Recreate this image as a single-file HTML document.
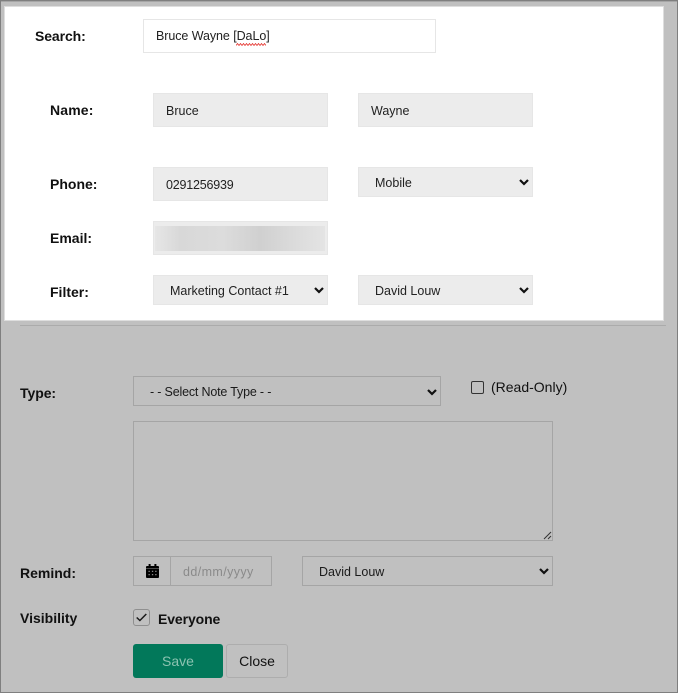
<!DOCTYPE html>
<html><head><meta charset="utf-8"><style>
html,body{margin:0;padding:0;width:678px;height:693px;overflow:hidden;background:#c0c0c0}
body{position:relative;font-family:"Liberation Sans",sans-serif;font-size:12.5px;color:#222}
#o{position:absolute;left:0;top:0;width:676px;height:691px;border:1px solid #7f7f7f}
#o2{position:absolute;left:1px;top:1px;width:676px;height:1px;background:#a6a6a6}
.a{position:absolute;box-sizing:border-box;white-space:nowrap}
.l{font-weight:bold;font-size:14px;color:#111;line-height:18px}
.f{background:#ececec;border:1px solid #e6e6e6;padding-left:12px}
.s{background:#ececec;border:1px solid #e6e6e6}
.g{border:1px solid #a5a5a5}
.t{position:absolute;white-space:nowrap;line-height:16px}
svg{position:absolute;display:block}
</style></head><body>
<div id="o"></div><div id="o2"></div>
<div class="a" style="left:4px;top:6px;width:660px;height:315px;background:#fff;border:1px solid #dedede"></div>
<div class="a" style="left:20px;top:325px;width:646px;height:1px;background:#ababab"></div>

<div class="a l" style="left:35px;top:27px;letter-spacing:-.1px">Search:</div>
<div class="a" style="left:143px;top:19px;width:293px;height:34px;background:#fff;border:1px solid #e6e6e6"></div>
<div class="t" style="left:156px;top:28px;letter-spacing:-.07px">Bruce Wayne [DaLo]</div>
<svg style="left:236px;top:43px" width="30" height="3"><path d="M0 2.5l1.5-2 1.5 2 1.5-2 1.5 2 1.500-2 1.500 2 1.500-2 1.500 2 1.500-2 1.500 2 1.500-2 1.500 2 1.500-2 1.500 2 1.500-2 1.500 2 1.500-2 1.500 2 1.500-2 1.500 2" fill="none" stroke="#e4352f" stroke-width=".8"/></svg>

<div class="a l" style="left:50px;top:101px;letter-spacing:.15px">Name:</div>
<div class="a f" style="left:153px;top:93px;width:175px;height:34px"></div>
<div class="t" style="left:166px;top:103px">Bruce</div>
<div class="a f" style="left:358px;top:93px;width:175px;height:34px"></div>
<div class="t" style="left:371px;top:103px">Wayne</div>

<div class="a l" style="left:50px;top:175px">Phone:</div>
<div class="a f" style="left:153px;top:167px;width:175px;height:34px"></div>
<div class="t" style="left:166px;top:177px;letter-spacing:-.2px">0291256939</div>
<div class="a s" style="left:358px;top:167px;width:175px;height:30px"></div>
<div class="t" style="left:375px;top:175px">Mobile</div>
<svg style="left:519px;top:178px" width="10" height="8"><path d="M1 2l4 4 4-4" fill="none" stroke="#111" stroke-width="2.200"/></svg>

<div class="a l" style="left:50px;top:229px">Email:</div>
<div class="a f" style="left:153px;top:221px;width:175px;height:34px"></div>
<div class="a" style="left:155px;top:226px;width:170px;height:25px;background:linear-gradient(90deg,#e6e6e6 0,#d8d8d8 15%,#dcdcdc 40%,#d0d0d0 62%,#dadada 80%,#e4e4e4 100%)"></div>

<div class="a l" style="left:50px;top:283px">Filter:</div>
<div class="a s" style="left:153px;top:275px;width:175px;height:30px"></div>
<div class="t" style="left:170px;top:283px">Marketing Contact #1</div>
<svg style="left:314px;top:286px" width="10" height="8"><path d="M1 2l4 4 4-4" fill="none" stroke="#111" stroke-width="2.200"/></svg>
<div class="a s" style="left:358px;top:275px;width:175px;height:30px"></div>
<div class="t" style="left:375px;top:283px">David Louw</div>
<svg style="left:519px;top:286px" width="10" height="8"><path d="M1 2l4 4 4-4" fill="none" stroke="#111" stroke-width="2.200"/></svg>

<div class="a l" style="left:20px;top:384px;letter-spacing:-.05px">Type:</div>
<div class="a g" style="left:133px;top:376px;width:308px;height:30px"></div>
<div class="t" style="left:150px;top:384px;color:#1a1a1a;letter-spacing:-.18px">- - Select Note Type - -</div>
<svg style="left:427px;top:388px" width="10" height="8"><path d="M1 2l4 4 4-4" fill="none" stroke="#111" stroke-width="2.200"/></svg>
<div class="a" style="left:471px;top:381px;width:13px;height:13px;border:1px solid #333;border-radius:2px"></div>
<div class="t" style="left:491px;top:379px;font-size:14px;color:#111">(Read-Only)</div>

<div class="a g" style="left:133px;top:421px;width:420px;height:120px"></div>
<svg style="left:543px;top:531px" width="9" height="9"><path d="M1 8L8 1M5 8L8 5" stroke="#333" stroke-width="1"/></svg>

<div class="a l" style="left:20px;top:564px">Remind:</div>
<div class="a g" style="left:133px;top:556px;width:139px;height:30px"></div>
<div class="a" style="left:170px;top:556px;width:1px;height:30px;background:#a5a5a5"></div>
<svg style="left:146px;top:564px" width="13" height="14" viewBox="0 0 13 14"><path d="M0 3a1 1 0 0 1 1-1h1.600V0h2v2h3.800V0h2v2H12a1 1 0 0 1 1 1v1.600H0zM0 5h13v8a1 1 0 0 1-1 1H1a1 1 0 0 1-1-1z" fill="#000"/><path d="M2.500 6.800h1.300v1.200H2.500zM5.900 6.800h1.300v1.200H5.900zM9.200 6.800h1.300v1.200H9.200zM2.500 10h1.300v1.200H2.500zM5.900 10h1.300v1.200H5.900zM9.200 10h1.300v1.200H9.200z" fill="#8a8a8a"/></svg>
<div class="t" style="left:183px;top:564px;color:#8a8a8a;letter-spacing:.4px">dd/mm/yyyy</div>
<div class="a g" style="left:302px;top:556px;width:251px;height:30px"></div>
<div class="t" style="left:319px;top:564px;color:#1a1a1a">David Louw</div>
<svg style="left:539px;top:567px" width="10" height="8"><path d="M1 2l4 4 4-4" fill="none" stroke="#111" stroke-width="2.200"/></svg>

<div class="a l" style="left:20px;top:609px">Visibility</div>
<div class="a" style="left:133px;top:609px;width:17px;height:17px;border:1px solid #8f8f8f;border-radius:3px"></div>
<svg style="left:136px;top:613px" width="11" height="9"><path d="M.7 4.500l3.200 3L10.300 1" fill="none" stroke="#1a1a1a" stroke-width="1.500"/></svg>
<div class="a l" style="left:158px;top:610px;letter-spacing:-.1px">Everyone</div>

<div class="a" style="left:133px;top:644px;width:90px;height:34px;background:#02785a;border-radius:3px;color:#8cc3b1;font-size:14px;line-height:34px;text-align:center">Save</div>
<div class="a" style="left:226px;top:644px;width:62px;height:34px;border:1px solid #adadad;border-radius:3px;color:#111;font-size:14px;line-height:32px;text-align:center">Close</div>
</body></html>
